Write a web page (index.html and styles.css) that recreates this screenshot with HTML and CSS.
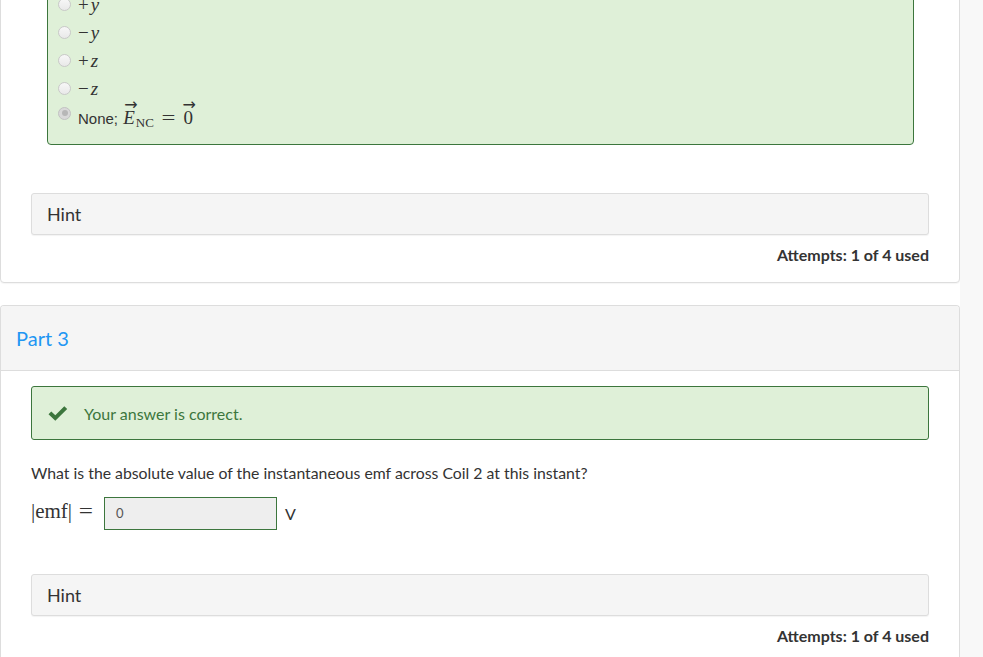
FILE: index.html
```html
<!DOCTYPE html>
<html>
<head>
<meta charset="utf-8">
<link rel="stylesheet" href="styles.css">
</head>
<body>
<div class="layout">
  <div class="main">
    <div class="panel panel-first">
      <div class="panel-body">
        <div class="answer-box">
          <div class="opt"><span class="radio"></span><span class="math">+<i>x</i></span></div>
          <div class="opt"><span class="radio"></span><span class="math">−<i>x</i></span></div>
          <div class="opt"><span class="radio"></span><span class="math">+<i>y</i></span></div>
          <div class="opt"><span class="radio"></span><span class="math">−<i>y</i></span></div>
          <div class="opt"><span class="radio"></span><span class="math">+<i>z</i></span></div>
          <div class="opt"><span class="radio"></span><span class="math">−<i>z</i></span></div>
          <div class="opt"><span class="radio checked"></span><span class="none-label">None; <span class="math"><span class="vec"><i>E</i></span><sub class="sub">NC</sub><span class="eq">=</span><span class="vec vec0">0</span></span></span></div>
        </div>
        <div class="hint">Hint</div>
        <div class="attempts">Attempts: 1 of 4 used</div>
      </div>
    </div>

    <div class="panel panel-second">
      <div class="panel-heading">Part 3</div>
      <div class="panel-body body2">
        <div class="alert">
          <svg class="check" viewBox="0 0 20 15" width="20" height="15"><path d="M0.5 8.2 L3.3 5.4 L7.3 9.2 L16.3 0.3 L19.2 3 L7.3 14.8 Z" fill="#3c763d"/></svg>
          <span>Your answer is correct.</span>
        </div>
        <p class="question">What is the absolute value of the instantaneous emf across Coil 2 at this instant?</p>
        <div class="input-row">
          <span class="math emf">|emf|<span class="eq2">=</span></span>
          <span class="input">0</span>
          <span class="unit">V</span>
        </div>
        <div class="hint hint2">Hint</div>
        <div class="attempts attempts2">Attempts: 1 of 4 used</div>
      </div>
    </div>
  </div>
  <div class="side"></div>
</div>
</body>
</html>
```

FILE: styles.css
```css
html, body {
  margin: 0;
  padding: 0;
  background: #fff;
  height: 100%;
  overflow: hidden;
}
body {
  font-family: Lato, "Noto Sans", sans-serif;
  color: #333;
}
.layout {
  display: flex;
  min-height: 100%;
}
.main {
  width: 960px;
  flex: none;
}
.side {
  flex: 1;
  background: #f8f8f8;
}
.panel {
  border: 1px solid #ddd;
  border-radius: 4px;
  background: #fff;
  box-shadow: 0 1px 1px rgba(0,0,0,0.04);
}
.panel-first {
  margin-top: -90px;
}
.panel-body {
  padding: 15px 30px 16px 30px;
}
.answer-box {
  margin: 0 15px 0 16px;
  background: #dff0d8;
  border: 1px solid #3c763d;
  border-radius: 4px;
  padding: 8px 10px 13px 10px;
}
.opt {
  height: 28px;
  display: flex;
  align-items: center;
  gap: 7px;
}
.radio {
  width: 11px;
  height: 11px;
  border-radius: 50%;
  border: 1px solid #c9c9c9;
  background: linear-gradient(#f7f7f7, #e9e9e9);
  flex: none;
  position: relative;
  top: -1px;
}
.radio.checked {
  background: #d9d9d9;
  border-color: #c2c2c2;
  top: -4px;
}
.radio.checked::after {
  content: "";
  position: absolute;
  left: 2.5px;
  top: 2.5px;
  width: 6px;
  height: 6px;
  border-radius: 50%;
  background: #b7b7b7;
}
.math {
  font-family: "Liberation Serif", "DejaVu Serif", serif;
  font-size: 19px;
  color: #333;
}
.math i {
  font-style: italic;
  margin-left: 2px;
}
.none-label {
  font-family: "Liberation Sans", Arial, sans-serif;
  font-size: 15px;
  position: relative;
  top: 2px;
}
.vec {
  position: relative;
  display: inline-block;
}
.vec i {
  margin-left: 1px;
}
.vec::before {
  content: "→";
  position: absolute;
  left: 2px;
  top: -12px;
  font-size: 16px;
  font-style: normal;
  font-family: "DejaVu Sans", sans-serif;
}
.vec0::before {
  left: -1px;
}
.sub {
  font-size: 13px;
  vertical-align: -3px;
  margin-left: 1px;
}
.eq {
  margin: 0 10px 0 9px;
  display: inline-block;
  transform: scaleX(1.3);
}
.hint {
  margin-top: 48px;
  height: 40px;
  border: 1px solid #ddd;
  border-radius: 3px;
  background: #f5f5f5;
  box-shadow: 0 1px 1px rgba(0,0,0,0.05);
  font-size: 18px;
  line-height: 40px;
  padding-left: 15px;
}
.attempts {
  margin-top: 9px;
  text-align: right;
  font-size: 16px;
  font-weight: bold;
  line-height: 22px;
}
.panel-first .panel-body {
  padding-bottom: 16px;
}
.panel-second {
  margin-top: 22px;
  border-bottom: none;
  border-radius: 4px 4px 0 0;
}
.panel-heading {
  height: 64px;
  background: #f5f5f5;
  border-bottom: 1px solid #ddd;
  border-radius: 3px 3px 0 0;
  color: #2196f3;
  font-size: 20px;
  line-height: 64px;
  padding-left: 15px;
}
.body2 {
  padding-top: 15px;
}
.alert {
  border: 1px solid #3c763d;
  background: #dff0d8;
  border-radius: 3px;
  height: 52px;
  display: flex;
  align-items: center;
  color: #3c763d;
  font-size: 16px;
}
.check {
  margin-left: 16px;
  margin-right: 16px;
}
.question {
  margin: 23px 0 0 0;
  font-size: 15.8px;
  line-height: 20px;
}
.input-row {
  margin-top: 14px;
  display: flex;
  align-items: center;
  height: 33px;
}
.emf {
  font-size: 21px;
  width: 73px;
  position: relative;
  top: -2px;
  white-space: nowrap;
}
.eq2 {
  margin-left: 8px;
  display: inline-block;
  transform: scaleX(1.2);
}
.input {
  width: 160px;
  height: 31px;
  border: 1px solid #3c763d;
  background: #eee;
  font-size: 13px;
  color: #555;
  line-height: 31px;
  padding-left: 11px;
  font-family: Lato, sans-serif;
}
.unit {
  margin-left: 8px;
  font-size: 16px;
  color: #333;
}
.hint2 {
  margin-top: 44px;
}
.attempts2 {
  margin-top: 9px;
}
```
